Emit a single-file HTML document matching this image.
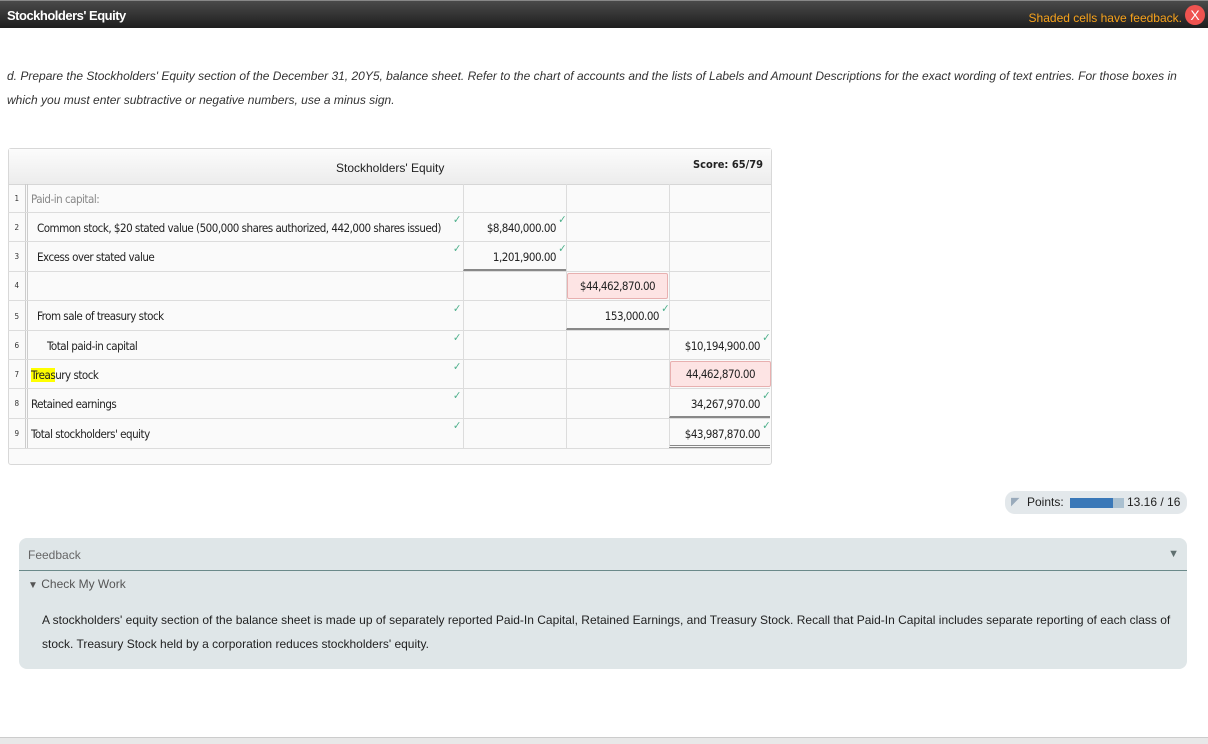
<!DOCTYPE html>
<html><head><meta charset="utf-8"><style>
body{margin:0;width:1208px;height:743px;background:#fff;font-family:"Liberation Sans",sans-serif;position:relative;overflow:hidden}
.top{position:absolute;left:0;top:0;width:1208px;height:28px;background:linear-gradient(#4a4a4a,#1e1e1e);border-top:1px solid #888;box-sizing:border-box}
.top .t{position:absolute;left:7px;top:7px;color:#fff;font-size:13px;font-weight:bold;letter-spacing:-0.5px}
.top .f{position:absolute;right:26px;top:10px;color:#f7a21b;font-size:12px}
.top .x{position:absolute;right:3px;top:4px;width:20px;height:20px;border-radius:50%;background:#ef5350;color:#fff;font-size:14px;text-align:center;line-height:20px}
.q{position:absolute;left:7px;top:64px;width:1190px;font-size:12px;font-style:italic;color:#333;line-height:24px}
.tbl{position:absolute;left:8px;top:148px;width:764px;height:317px;border:1px solid #d8d8d8;border-radius:3px;box-sizing:border-box;background:#fafafa}
.hd{position:absolute;left:0;top:0;width:762px;height:35px;background:linear-gradient(#fcfcfc,#ececec);border-bottom:1px solid #d6d6d6}
.hd .a{position:absolute;left:327px;top:12px;font-size:12px;color:#222}
.hd .b{position:absolute;right:8px;top:9px;font-weight:bold;color:#222;font-family:"DejaVu Sans Condensed",sans-serif;font-size:11px}
.r{position:absolute;left:0;width:762px;border-bottom:1px solid #dcdcdc;font-family:"DejaVu Sans Condensed","Liberation Sans Narrow",sans-serif;font-size:11.5px;color:#222;letter-spacing:-0.5px}
.r .n{position:absolute;left:0;width:17px;text-align:center;font-size:8px;color:#333;height:100%;border-right:3px double #ccc}
.r .l{position:absolute;left:23px}
.c{position:absolute;top:0;height:100%;border-left:1px solid #dcdcdc;box-sizing:border-box}
.v{position:absolute;right:10px}
.ck{position:absolute;color:#4caf8a;font-size:11px}
.pk{position:absolute;background:#fde4e4;border:1px solid #e8b0b0;border-radius:2px;text-align:center;box-sizing:border-box}
.pts{position:absolute;left:1005px;top:491px;width:182px;height:23px;background:#e3e8eb;border-radius:10px;font-size:12px;color:#222}
.fb{position:absolute;left:19px;top:538px;width:1168px;height:131px;background:#dfe6e8;border-radius:8px}
</style></head><body>
<div class="top"><span class="t">Stockholders' Equity</span><span class="f">Shaded cells have feedback.</span><span class="x">X</span></div>
<div class="q">d. Prepare the Stockholders' Equity section of the December 31, 20Y5, balance sheet. Refer to the chart of accounts and the lists of Labels and Amount Descriptions for the exact wording of text entries. For those boxes in which you must enter subtractive or negative numbers, use a minus sign.</div>
<div class="tbl">
<div class="hd"><span class="a">Stockholders' Equity</span><span class="b">Score: 65/79</span></div>
</div>
<div style="position:absolute;left:8px;top:184px;width:762px;">
<div class="r" style="top:0;height:28px;line-height:30px"><span class="n">1</span><span class="l" style="color:#888">Paid-in capital:</span><div class="c" style="left:455px;width:103px"></div><div class="c" style="left:558px;width:103px"></div><div class="c" style="left:661px;width:101px"></div></div>
<div class="r" style="top:29px;height:28px;line-height:30px"><span class="n">2</span><span class="l" style="left:29px">Common stock, $20 stated value (500,000 shares authorized, 442,000 shares issued)</span><span class="ck" style="left:445px;top:-8px">✓</span><div class="c" style="left:455px;width:103px"><span class="v">$8,840,000.00</span><span class="ck" style="right:0px;top:-8px">✓</span></div><div class="c" style="left:558px;width:103px"></div><div class="c" style="left:661px;width:101px"></div></div>
<div class="r" style="top:58px;height:29px;line-height:30px"><span class="n">3</span><span class="l" style="left:29px">Excess over stated value</span><span class="ck" style="left:445px;top:-8px">✓</span><div class="c" style="left:455px;width:103px;border-bottom:2px solid #888"><span class="v">1,201,900.00</span><span class="ck" style="right:0px;top:-8px">✓</span></div><div class="c" style="left:558px;width:103px"></div><div class="c" style="left:661px;width:101px"></div></div>
<div class="r" style="top:88px;height:28px;line-height:28px"><span class="n">4</span><div class="c" style="left:455px;width:103px"></div><div class="c" style="left:558px;width:103px"><div class="pk" style="left:0;top:1px;width:101px;height:26px;line-height:25px">$44,462,870.00</div></div><div class="c" style="left:661px;width:101px"></div></div>
<div class="r" style="top:117px;height:29px;line-height:31px"><span class="n">5</span><span class="l" style="left:29px">From sale of treasury stock</span><span class="ck" style="left:445px;top:-8px">✓</span><div class="c" style="left:455px;width:103px"></div><div class="c" style="left:558px;width:103px;border-bottom:2px solid #888"><span class="v">153,000.00</span><span class="ck" style="right:0px;top:-8px">✓</span></div><div class="c" style="left:661px;width:101px"></div></div>
<div class="r" style="top:147px;height:28px;line-height:30px"><span class="n">6</span><span class="l" style="left:39px">Total paid-in capital</span><span class="ck" style="left:445px;top:-8px">✓</span><div class="c" style="left:455px;width:103px"></div><div class="c" style="left:558px;width:103px"></div><div class="c" style="left:661px;width:101px"><span class="v">$10,194,900.00</span><span class="ck" style="right:0px;top:-8px">✓</span></div></div>
<div class="r" style="top:176px;height:28px;line-height:30px"><span class="n">7</span><span class="l"><span style="background:#ff0">Treas</span>ury stock</span><span class="ck" style="left:445px;top:-8px">✓</span><div class="c" style="left:455px;width:103px"></div><div class="c" style="left:558px;width:103px"></div><div class="c" style="left:661px;width:101px"><div class="pk" style="left:0;top:1px;width:101px;height:26px;line-height:25px">44,462,870.00</div></div></div>
<div class="r" style="top:205px;height:29px;line-height:30px"><span class="n">8</span><span class="l">Retained earnings</span><span class="ck" style="left:445px;top:-8px">✓</span><div class="c" style="left:455px;width:103px"></div><div class="c" style="left:558px;width:103px"></div><div class="c" style="left:661px;width:101px;border-bottom:2px solid #888"><span class="v">34,267,970.00</span><span class="ck" style="right:0px;top:-8px">✓</span></div></div>
<div class="r" style="top:235px;height:29px;line-height:30px"><span class="n">9</span><span class="l">Total stockholders' equity</span><span class="ck" style="left:445px;top:-8px">✓</span><div class="c" style="left:455px;width:103px"></div><div class="c" style="left:558px;width:103px"></div><div class="c" style="left:661px;width:101px;border-bottom:3px double #888"><span class="v">$43,987,870.00</span><span class="ck" style="right:0px;top:-8px">✓</span></div></div>
</div>
<div class="pts"><span style="position:absolute;left:6px;top:4px;color:#9ab;font-size:11px">◤</span><span style="position:absolute;left:22px;top:4px">Points:</span><span style="position:absolute;left:65px;top:7px;width:54px;height:10px;background:#aac0d0"></span><span style="position:absolute;left:65px;top:7px;width:43px;height:10px;background:#3a78b8"></span><span style="position:absolute;left:122px;top:4px">13.16 / 16</span></div>
<div class="fb">
<div style="position:absolute;left:9px;top:10px;font-size:12px;color:#666">Feedback</div>
<div style="position:absolute;right:8px;top:10px;font-size:11px;color:#607070">▼</div>
<div style="position:absolute;left:0;top:32px;width:1168px;border-top:1px solid #6b8a8a"></div>
<div style="position:absolute;left:9px;top:39px;font-size:12px;color:#555"><span style="font-size:10px">▼</span> Check My Work</div>
<div style="position:absolute;left:23px;top:70px;width:1140px;font-size:12px;color:#222;line-height:24px">A stockholders' equity section of the balance sheet is made up of separately reported Paid-In Capital, Retained Earnings, and Treasury Stock. Recall that Paid-In Capital includes separate reporting of each class of stock. Treasury Stock held by a corporation reduces stockholders' equity.</div>
</div>
<div style="position:absolute;left:0;top:737px;width:1208px;height:6px;background:#e8e8e8;border-top:1px solid #ccc"></div>
</body></html>
